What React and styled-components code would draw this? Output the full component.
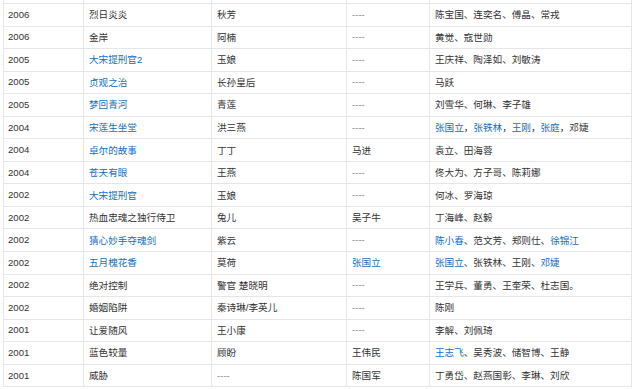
import React from "react";
import styled, { createGlobalStyle } from "styled-components";

const GlobalStyle = createGlobalStyle`
  html, body {
    margin: 0;
    padding: 0;
    background: #fff;
    overflow: hidden;
  }
  body {
    font-family: "Liberation Sans", Arial, "Noto Sans CJK SC", sans-serif;
    font-size: 9.6px;
    color: #333;
  }
`;

const ROW_H = 22.55;

const rows = [
  ["2006", "烈日炎炎", "秋芳", "----", "陈宝国、连奕名、傅晶、常戎"],
  ["2006", "金岸", "阿楠", "----", "黄觉、寇世勋"],
  ["2005", { link: "大宋提刑官2" }, "玉娘", "----", "王庆祥、陶泽如、刘敏涛"],
  ["2005", { link: "贞观之治" }, "长孙皇后", "----", "马跃"],
  ["2005", { link: "梦回青河" }, "青莲", "----", "刘雪华、何琳、李子雄"],
  [
    "2004",
    { link: "宋莲生坐堂" },
    "洪三燕",
    "----",
    [{ link: "张国立" }, "，", { link: "张铁林" }, "，", { link: "王刚" }, "，", { link: "张庭" }, "，邓婕"],
  ],
  ["2004", { link: "卓尔的故事" }, "丁丁", "马进", "袁立、田海蓉"],
  ["2004", { link: "苍天有眼" }, "王燕", "----", "佟大为、方子哥、陈莉娜"],
  ["2002", { link: "大宋提刑官" }, "玉娘", "----", "何冰、罗海琼"],
  ["2002", "热血忠魂之独行侍卫", "兔儿", "吴子牛", "丁海峰、赵毅"],
  [
    "2002",
    { link: "猜心妙手夺魂剑" },
    "紫云",
    "----",
    [{ link: "陈小春" }, "、范文芳、郑则仕、", { link: "徐锦江" }],
  ],
  [
    "2002",
    { link: "五月槐花香" },
    "莫荷",
    { link: "张国立" },
    [{ link: "张国立" }, "、张铁林、王刚、", { link: "邓婕" }],
  ],
  ["2002", "绝对控制", "警官 楚晓明", "----", "王学兵、董勇、王奎荣、杜志国。"],
  ["2002", "婚姻陷阱", "秦诗琳/李英儿", "----", "陈刚"],
  ["2001", "让爱随风", "王小康", "----", "李解、刘佩琦"],
  ["2001", "蓝色较量", "顾盼", "王伟民", [{ link: "王志飞" }, "、吴秀波、储智博、王静"]],
  ["2001", "威胁", "----", "陈国军", "丁勇岱、赵燕国彰、李琳、刘欣"],
];

function renderPart(part, i) {
  if (part === "----") return <Dash key={i}>----</Dash>;
  if (typeof part === "string") return <React.Fragment key={i}>{part}</React.Fragment>;
  return <LinkText key={i}>{part.link}</LinkText>;
}

function CellContent({ value }) {
  if (Array.isArray(value)) return value.map(renderPart);
  return renderPart(value, 0);
}

export default function App() {
  return (
    <>
      <GlobalStyle />
      <Table>
        {/* previous row, scrolled mostly out of view */}
        <Row>
          {[0, 1, 2, 3, 4].map((c) => (
            <Cell key={c} $first={c === 0} />
          ))}
        </Row>
        {rows.map((row, r) => (
          <Row key={r}>
            {row.map((v, c) => (
              <Cell key={c} $first={c === 0}>
                <CellContent value={v} />
              </Cell>
            ))}
          </Row>
        ))}
      </Table>
    </>
  );
}

const Table = styled.div`
  margin: -18.55px 0 0 3px;
  width: 629px;
  border-left: 1px solid #e6e6e6;
  box-sizing: border-box;
`;

const Row = styled.div`
  display: grid;
  grid-template-columns: 80px 128px 135px 83px 202px;
  height: ${ROW_H}px;
`;

const Cell = styled.div`
  display: flex;
  align-items: center;
  box-sizing: border-box;
  padding: 0 0 1px ${({ $first }) => ($first ? "4px" : "5px")};
  border-right: 1px solid #e6e6e6;
  border-bottom: 1px solid #e6e6e6;
  white-space: nowrap;
  overflow: hidden;
`;

const LinkText = styled.a`
  color: #136ec2;
  text-decoration: none;
  cursor: pointer;
`;

const Dash = styled.span`
  color: #888;
`;
